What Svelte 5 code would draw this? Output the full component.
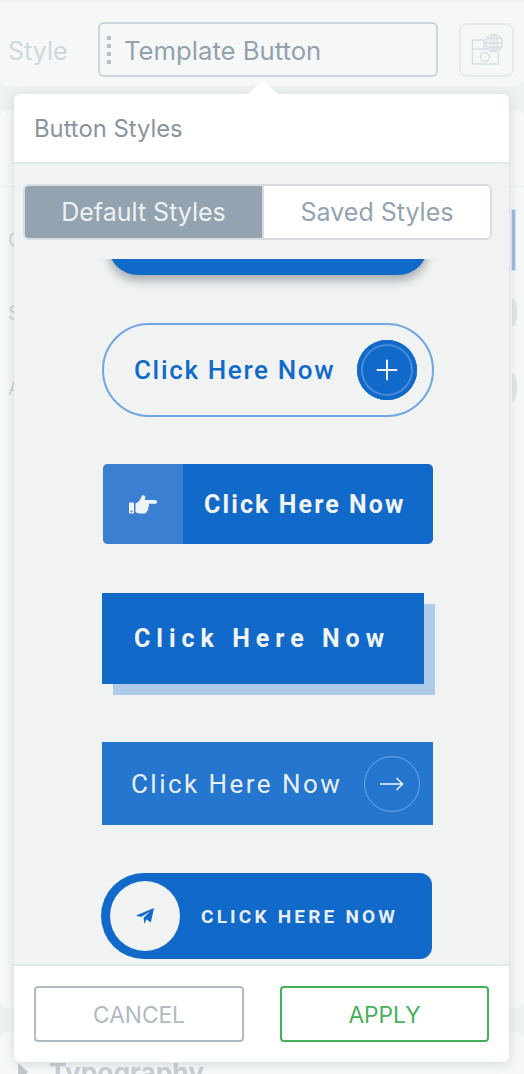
<script lang="ts">
  let tab = $state('default')
</script>

<div class="page">
  <header class="style-row">
    <span class="style-label">Style</span>
    <div class="style-select">
      <span class="grip"><i></i><i></i><i></i><i></i></span>
      <span>Template Button</span>
    </div>
    <button class="save-global" type="button" aria-label="Save global style">
      <svg width="34" height="34" viewBox="0 0 34 34" fill="none" stroke="#d8dfe3" stroke-width="1.5">
        <path d="M15 7H3.500a1 1 0 0 0-1 1v22a1 1 0 0 0 1 1h24a1 1 0 0 0 1-1V19" />
        <path d="M3 16h17M14 7v9" />
        <circle cx="15" cy="24" r="4.500" />
        <circle cx="24" cy="10" r="8.500" fill="#f6f8f8" />
        <ellipse cx="24" cy="10" rx="3.500" ry="8.500" />
        <path d="M15.500 10h17M17 5.500h14M17 14.500h14M24 1.500v17" />
      </svg>
    </button>
  </header>

  <section class="bg-panel first">
    <div class="bg-head"></div>
    <div class="bg-line top"><span class="bg-letter">C</span><span class="scroll-thumb"></span></div>
    <div class="bg-line"><span class="bg-letter">S</span><span class="knob"></span></div>
    <div class="bg-line"><span class="bg-letter">A</span><span class="knob"></span></div>
  </section>
  <section class="bg-panel second">
    <span class="caret"></span>
    <span class="bg-title">Typography</span>
  </section>

  <div class="popover">
    <span class="arrow"></span>
    <div class="pop-head">Button Styles</div>
    <div class="pop-body">
      <div class="tabs">
        <button type="button" class:active={tab === 'default'} onclick={() => (tab = 'default')}>Default Styles</button>
        <button type="button" class:active={tab === 'saved'} onclick={() => (tab = 'saved')}>Saved Styles</button>
      </div>

      <div class="list">
        <div class="b0"></div>

        <div class="b1">
          <span>Click Here Now</span>
          <span class="plus">
            <svg width="22" height="22" viewBox="0 0 22 22" stroke="#f1f5fa" stroke-width="2" stroke-linecap="round">
              <path d="M11 1.500v19M1.500 11h19" />
            </svg>
          </span>
        </div>

        <div class="b2">
          <span class="hand">
            <svg width="28" height="21" viewBox="0 0 28 21" fill="#f1f4f5">
              <path fill-rule="evenodd" d="M.8 8.500h3.400a.8.8 0 0 1 .8.800v9.400a.8.800 0 0 1-.8.800H.8a.8.800 0 0 1-.8-.8V9.300a.8.800 0 0 1 .8-.8zM2.500 16.500a1 1 0 1 0 0 2 1 1 0 0 0 0-2z" />
              <path d="M6.500 9.500C9 8.500 11.500 6 12.500 2.500c.5-1.800 3.500-1.600 3.700.5.100 1-.2 2-.6 3h10.600c2.400 0 2.400 3.800 0 3.800h-6.400c.4 1.600.2 3-.6 4 .2 1.400-.3 2.600-1.300 3.300 0 1.500-1 2.400-2.600 2.400H11c-2 0-3.300-.8-4.500-1.400z" />
            </svg>
          </span>
          <span class="b2-text">Click Here Now</span>
        </div>

        <div class="b3">Click Here Now</div>

        <div class="b4">
          <span>Click Here Now</span>
          <span class="ring">
            <svg width="24" height="14" viewBox="0 0 24 14" fill="none" stroke="#eef3f8" stroke-width="1.500">
              <path d="M0 7h22.500M16.500 1l6 6-6 6" />
            </svg>
          </span>
        </div>

        <div class="b5">
          <span class="disc">
            <svg width="18" height="16" viewBox="0 0 18 16" fill="#1169c9">
              <path d="M0 7.500 18 0l-3.200 14.500-4.300-3.300L8.300 16 7.600 9.800 14 3.500 5 9z" />
            </svg>
          </span>
          <span class="b5-text">CLICK HERE NOW</span>
        </div>
      </div>
    </div>
    <div class="pop-foot">
      <button type="button" class="cancel">CANCEL</button>
      <button type="button" class="apply">APPLY</button>
    </div>
  </div>
</div>

<style>
  :global(body) {
    margin: 0;
    background: #eff2f2;
    font-family: Inter, "Open Sans", sans-serif;
  }

  .page {
    position: relative;
    width: 524px;
    height: 1074px;
    overflow: hidden;
  }

  .style-row {
    display: flex;
    align-items: center;
    height: 84px;
    margin-top: 2px;
    padding: 12px 0 0 8px;
    box-sizing: border-box;
    background: #f6f8f8;
    border-radius: 0 0 8px 8px;
  }

  .style-label {
    width: 90px;
    margin-top: 2px;
    font-size: 25px;
    color: #cfd7dc;
  }

  .style-select {
    display: flex;
    align-items: center;
    gap: 13px;
    width: 340px;
    height: 55px;
    box-sizing: border-box;
    padding: 1px 0 0 7px;
    margin-top: -1px;
    border: 2px solid #ced6dd;
    border-radius: 6px;
    font-size: 25.700px;
    color: #93a1ae;
  }

  .grip {
    display: flex;
    flex-direction: column;
    gap: 4px;
  }

  .grip i {
    width: 4px;
    height: 4px;
    background: #b5bfc8;
  }

  .save-global {
    display: flex;
    align-items: center;
    justify-content: center;
    width: 55px;
    height: 54px;
    margin-left: 21px;
    padding: 0;
    background: none;
    border: 2px solid #e6ebee;
    border-radius: 8px;
  }

  .bg-panel {
    background: #f7f9f9;
    border-radius: 8px;
    margin-top: 24px;
  }

  .bg-panel.first {
    height: 898px;
    box-sizing: border-box;
  }

  .bg-head {
    height: 76px;
    margin-bottom: 23px;
    border-bottom: 1px solid #eceff0;
  }

  .bg-line {
    display: flex;
    align-items: center;
    justify-content: space-between;
    margin-bottom: 46px;
    padding: 0 7px 0 8px;
  }

  .bg-line.top {
    margin-bottom: 28px;
  }

  .bg-letter {
    font-size: 20px;
    color: #cfd6da;
  }

  .scroll-thumb {
    width: 3px;
    height: 60px;
    margin-right: 2px;
    background: #9db8e0;
    box-shadow: 0 0 0 1px #e0e4e8;
  }

  .knob {
    width: 5px;
    height: 29px;
    border-radius: 0 5px 5px 0 / 0 14px 14px 0;
    background: #e2e5e6;
  }

  .bg-panel.second {
    display: flex;
    align-items: center;
    gap: 21px;
    height: 60px;
    box-sizing: border-box;
    padding: 20px 0 0 18px;
    margin-top: 24px;
  }

  .caret {
    border-left: 10px solid #c2c7cb;
    border-top: 9px solid transparent;
    border-bottom: 9px solid transparent;
  }

  .bg-title {
    font-size: 26.300px;
    font-weight: 700;
    color: #c9ced2;
  }

  .popover {
    position: absolute;
    left: 14px;
    top: 94px;
    width: 495px;
    height: 968px;
    display: flex;
    flex-direction: column;
    background: #fff;
    border-radius: 6px;
    box-shadow: 0 2px 12px rgba(120, 140, 150, 0.3);
  }

  .arrow {
    position: absolute;
    left: 234px;
    top: -14px;
    width: 0;
    height: 0;
    border-left: 15px solid transparent;
    border-right: 15px solid transparent;
    border-bottom: 14px solid #fff;
  }

  .pop-head {
    height: 70px;
    box-sizing: border-box;
    padding: 20px 0 0 20px;
    font-size: 23.800px;
    color: #8a949c;
    border-bottom: 2px solid #e3e9ea;
  }

  .pop-body {
    flex: 1;
    min-height: 0;
    display: flex;
    flex-direction: column;
    background: #f0f3f2;
  }

  .tabs {
    display: flex;
    flex: none;
    width: 469px;
    height: 56px;
    box-sizing: border-box;
    margin: 20px 0 0 9px;
    border: 2px solid #d5dde2;
    border-radius: 6px;
    overflow: hidden;
    background: #fff;
  }

  .tabs button {
    flex: 1;
    padding: 0;
    border: 0;
    font: inherit;
    font-size: 25px;
    color: #93a3b1;
    background: #fff;
  }

  .tabs button.active {
    flex: none;
    width: 237px;
    margin-right: 2px;
    color: #eef1f3;
    background: #94a3b0;
  }

  .tabs button:not(.active) {
    box-shadow: -2px 0 0 #d5dde2;
  }

  .list {
    flex: 1;
    min-height: 0;
    margin-top: 19px;
    overflow: hidden;
    font-family: Roboto, sans-serif;
    padding-left: 88px;
  }

  .b0 {
    width: 320px;
    height: 60px;
    margin: -44px 0 0 6px;
    background: #1169c9;
    border-radius: 30px;
    box-shadow: 0 6px 10px rgba(60, 70, 80, 0.4);
  }

  .b1 {
    display: flex;
    align-items: center;
    justify-content: space-between;
    width: 332px;
    height: 94px;
    box-sizing: border-box;
    margin-top: 48px;
    padding: 0 15px 0 30px;
    border: 2px solid #72a6e4;
    border-radius: 47px;
    font-size: 26px;
    font-weight: 500;
    letter-spacing: 1.650px;
    color: #1169c9;
  }

  .plus {
    display: flex;
    align-items: center;
    justify-content: center;
    width: 60px;
    height: 60px;
    box-sizing: border-box;
    border-radius: 50%;
    background: #1169c9;
    box-shadow: inset 0 0 0 4px #1169c9, inset 0 0 0 6px #4a8bd8;
  }

  .b2 {
    display: flex;
    width: 330px;
    height: 80px;
    margin: 47px 0 0 1px;
    border-radius: 5px;
    overflow: hidden;
    background: #1169c9;
    color: #f1f4f5;
  }

  .hand {
    display: flex;
    align-items: center;
    justify-content: center;
    width: 80px;
    background: #3a7fd2;
  }

  .b2-text {
    align-self: center;
    margin-left: 21px;
    font-size: 25px;
    font-weight: 700;
    letter-spacing: 2.100px;
  }

  .b3 {
    display: flex;
    align-items: center;
    width: 322px;
    height: 91px;
    margin-top: 49px;
    padding-left: 32px;
    box-sizing: border-box;
    background: #1169c9;
    box-shadow: 11px 11px 0 #aecbe9;
    color: #f1f4f5;
    font-size: 25px;
    font-weight: 700;
    letter-spacing: 6px;
  }

  .b4 {
    display: flex;
    align-items: center;
    justify-content: space-between;
    width: 331px;
    height: 83px;
    box-sizing: border-box;
    margin-top: 58px;
    padding: 0 13px 0 29px;
    background: #2476ce;
    color: #e9eff6;
    font-size: 26px;
    letter-spacing: 2.450px;
  }

  .ring {
    display: flex;
    align-items: center;
    justify-content: center;
    width: 56px;
    height: 56px;
    box-sizing: border-box;
    border: 1.500px solid #77a6de;
    border-radius: 50%;
  }

  .b5 {
    display: flex;
    align-items: center;
    width: 331px;
    height: 86px;
    margin: 48px 0 0 -1px;
    box-sizing: border-box;
    padding-left: 9px;
    background: #1169c9;
    border-radius: 43px 12px 12px 43px;
    color: #e8eef5;
  }

  .disc {
    display: flex;
    align-items: center;
    justify-content: center;
    width: 70px;
    height: 70px;
    border-radius: 50%;
    background: #f0f3f2;
  }

  .b5-text {
    margin-left: 21px;
    font-size: 19px;
    font-weight: 700;
    letter-spacing: 3.200px;
  }

  .pop-foot {
    display: flex;
    justify-content: space-between;
    height: 98px;
    box-sizing: border-box;
    padding: 20px 20px 0;
    border-top: 2px solid #e3e9ea;
  }

  .pop-foot button {
    width: 209px;
    height: 56px;
    border-radius: 4px;
    background: #fff;
    font: inherit;
    font-size: 22.700px;
  }

  .pop-foot .cancel {
    width: 210px;
    border: 2px solid #b0bac4;
    color: #b0bac4;
  }

  .apply {
    border: 2px solid #45b15a;
    color: #45b15a;
  }
</style>
